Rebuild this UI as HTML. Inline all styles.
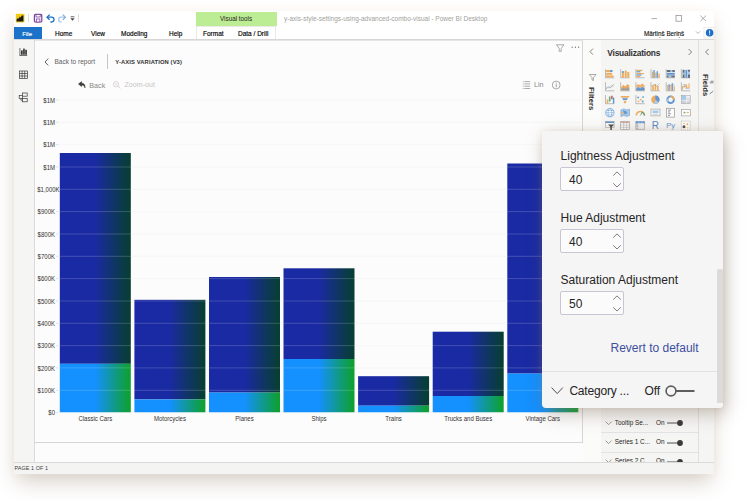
<!DOCTYPE html>
<html lang="en">
<head>
<meta charset="utf-8">
<title>Power BI Desktop</title>
<style>
html,body{margin:0;padding:0;}
body{width:750px;height:500px;overflow:hidden;background:#fff;position:relative;font-family:"Liberation Sans",sans-serif;color:#252423;}
.abs,.win *{position:absolute;}
.win{position:absolute;left:14px;top:11px;width:700px;height:463px;background:#fff;box-shadow:0 11px 20px -3px rgba(125,110,90,.30),0 2px 10px rgba(235,195,140,.13);}
.t{white-space:nowrap;line-height:1;}
/* title bar */
.titlebar{left:0;top:0;width:700px;height:16px;background:#fff;}
.tabs{left:0;top:16px;width:700px;height:12px;background:#fff;}
.file{left:0;top:16px;width:28px;height:12px;background:#1b72c8;}
.ribline{left:0;top:28px;width:700px;height:1px;background:#d8d6d4;}
.tab{font-size:6.5px;top:19.5px;color:#000;-webkit-text-stroke:.15px #000;}
.vt{left:182px;top:1px;width:81px;height:14.2px;background:#bcec94;}
.ctxtabs{left:182px;top:15.2px;width:80px;height:13px;border:1px solid #ebe9e7;border-bottom:none;background:#fff;box-sizing:border-box;}
/* left nav */
.leftnav{left:0;top:29px;width:21px;height:422px;background:#f5f5f4;border-right:1px solid #dcdad8;box-sizing:border-box;}
/* canvas */
.canvas{left:21px;top:29px;width:548px;height:403px;background:#fcfcfc;border:1px solid #d8d6d4;border-top-color:#e8e6e4;border-left:none;box-sizing:border-box;}
.pagetabs{left:21px;top:432px;width:548px;height:19px;background:#fcfcfc;box-sizing:border-box;}
.status{left:0;top:451px;width:700px;height:12px;background:#f4f4f3;border-top:1px solid #dcdad8;box-sizing:border-box;}
/* panes */
.filters{left:569px;top:29px;width:18px;height:422px;background:#fbfbfa;}
.viz{left:587px;top:29px;width:97px;height:422px;background:#f5f5f4;}
.fields{left:685px;top:29px;width:15px;height:422px;background:#f5f5f4;}
/* popup */
.pop{position:absolute;left:542px;top:131px;width:181px;height:277px;background:#f5f5f6;border-radius:2px 2px 4px 4px;overflow:hidden;}
.popsh{position:absolute;left:542px;top:131px;width:181px;height:277px;border-radius:2px 2px 4px 4px;box-shadow:3px 6px 18px rgba(110,95,75,.36),0 0 7px rgba(200,165,120,.20);}
.pop *{position:absolute;}
.lbl{font-size:12px;color:#252423;left:18.6px;}
.inp{left:18px;width:63.5px;height:23.6px;box-sizing:border-box;border:1px solid #cbc4d4;border-radius:2px;background:#fbfbfb;}
.inp .v{left:8px;top:5.6px;font-size:12px;}
</style>
</head>
<body>
<div class="win" id="win">
  <div class="titlebar"></div>
  <div class="tabs"></div>
  <div class="vt"></div>
  <div class="ctxtabs"></div>
  <div class="file"></div>
  <div class="ribline"></div>
  <!-- title bar icons -->
  <svg class="abs" style="left:0;top:0" width="80" height="16" viewBox="0 0 80 16">
    <rect x="1.8" y="2.8" width="8.6" height="8.6" fill="#f2c811"/>
    <path d="M2.6 10.4 V8.4 L4 7 L4.8 7.8 L5.8 5.6 L6.6 6.6 L7.8 4.4 L9.4 4.4 V10.4 Z" fill="#1a1a1a"/>
    <rect x="14" y="3" width="0.6" height="8" fill="#c8c6c4"/>
    <rect x="20.4" y="3.4" width="7.4" height="7.6" rx="1" fill="none" stroke="#7b3f9e" stroke-width="1.2"/>
    <rect x="22" y="3.4" width="4.2" height="2.6" fill="#fff" stroke="#7b3f9e" stroke-width="0.8"/>
    <rect x="22.3" y="8" width="3.6" height="3" fill="#fff" stroke="#7b3f9e" stroke-width="0.8"/>
    <path d="M33.6 6.2 H37.6 A2.4 2.4 0 0 1 37.6 11 H36.4" fill="none" stroke="#1f6fc6" stroke-width="1.3"/>
    <path d="M35.6 3.6 L33 6.2 L35.6 8.8" fill="none" stroke="#1f6fc6" stroke-width="1.3"/>
    <g transform="translate(1.2 0)"><path d="M49.4 6.2 H45.8 A2.4 2.4 0 0 0 45.8 11 H46.6" fill="none" stroke="#a9c4e6" stroke-width="1.2"/>
    <path d="M47.6 3.6 L50.2 6.2 L47.6 8.8" fill="none" stroke="#7fa8dc" stroke-width="1.2"/></g>
    <rect x="56.6" y="5.4" width="3.8" height="0.8" fill="#444"/>
    <path d="M56.4 7.2 H60.6 L58.5 9.8 Z" fill="#444"/>
    <rect x="64.4" y="3" width="0.6" height="8" fill="#c8c6c4"/>
  </svg>
  <div class="t" style="left:270px;top:4.5px;font-size:6.5px;color:#a19f9d;">y-axis-style-settings-using-advanced-combo-visual - Power BI Desktop</div>
  <svg class="abs" style="left:630px;top:0" width="70" height="16" viewBox="0 0 70 16">
    <path d="M7.5 7.6 H13" stroke="#8a8886" stroke-width="0.7"/>
    <rect x="32" y="4.6" width="5.6" height="5.6" fill="none" stroke="#8a8886" stroke-width="0.7"/>
    <path d="M56.4 4.6 L62 10.2 M62 4.6 L56.4 10.2" stroke="#8a8886" stroke-width="0.7"/>
  </svg>
  <!-- ribbon tabs -->
  <div class="t tab" style="left:8.2px;color:#fff;font-size:6.2px;-webkit-text-stroke:.15px #fff;">File</div>
  <div class="t tab" style="left:41px;">Home</div>
  <div class="t tab" style="left:77px;">View</div>
  <div class="t tab" style="left:107px;">Modeling</div>
  <div class="t tab" style="left:155px;">Help</div>
  <div class="t tab" style="left:189px;">Format</div>
  <div class="t tab" style="left:224px;">Data / Drill</div>
  <div class="t" style="left:206px;top:5px;font-size:6.3px;color:#252423;">Visual tools</div>
  <div class="t" style="left:630px;top:19.5px;font-size:6.3px;color:#111;-webkit-text-stroke:.12px #111;">Mārtiņš Beriņš</div>
  <svg class="abs" style="left:678px;top:16px" width="22" height="12" viewBox="0 0 22 12">
    <path d="M4 4.4 L6 6.4 L8 4.4" fill="none" stroke="#8a8886" stroke-width="0.6"/>
    <rect x="12" y="0.5" width="10" height="10.5" fill="#fff" stroke="#dcdad8" stroke-width="0.5"/>
    <circle cx="17.6" cy="5.8" r="3.8" fill="#1b6ec9"/>
    <rect x="17.2" y="3.4" width="0.9" height="3.2" fill="#fff"/>
    <rect x="17.2" y="7.2" width="0.9" height="0.9" fill="#fff"/>
  </svg>
  <div class="leftnav"></div>
  <svg class="abs" style="left:0;top:29px" width="20" height="70" viewBox="0 0 20 70">
    <g fill="#3b3a39">
      <rect x="5.6" y="8" width="0.7" height="7.6"/><rect x="5.6" y="15" width="7.6" height="0.7"/>
      <rect x="7" y="10.4" width="1.7" height="4.4"/><rect x="9.1" y="8.6" width="1.7" height="6.2"/><rect x="11.2" y="9.8" width="1.7" height="5"/>
    </g>
    <g fill="none" stroke="#3b3a39" stroke-width="0.7">
      <rect x="5.4" y="31" width="8" height="7.4"/>
      <path d="M5.4 33.5 H13.4 M5.4 36 H13.4 M8.1 31 V38.4 M10.7 31 V38.4"/>
      <rect x="8.6" y="53" width="4.6" height="3.2"/>
      <rect x="5.2" y="55.4" width="3.4" height="3.2" fill="#f3f2f1"/>
      <rect x="8.6" y="58.6" width="4.6" height="3.2"/>
      <path d="M6.9 58.6 V60.2 H8.6"/>
    </g>
  </svg>
  <div class="canvas" id="canvas"></div>
  <div class="pagetabs"></div>
  <!-- focus-mode toolbar -->
  <svg class="abs" style="left:28px;top:40px" width="30" height="20" viewBox="0 0 30 20">
    <path d="M6.2 7.6 L3 11 L6.2 14.4" fill="none" stroke="#605e5c" stroke-width="1"/>
  </svg>
  <div class="t" style="left:40.5px;top:48.3px;font-size:6.5px;color:#605e5c;">Back to report</div>
  <div style="left:92.5px;top:43px;width:1px;height:15px;background:#c8c6c4;"></div>
  <div class="t" style="left:101.3px;top:48.7px;font-size:5.8px;font-weight:bold;letter-spacing:.12px;color:#323130;">Y-AXIS VARIATION (V3)</div>
  <svg class="abs" style="left:60px;top:66px" width="90" height="16" viewBox="0 0 90 16">
    <path d="M7.6 4.6 L4.4 7 L7.6 9.6 V8 Q10.4 7.8 11 11 Q11.6 6.4 7.6 6.2 Z" fill="#3b3a39" stroke="#3b3a39" stroke-width="0.5" stroke-linejoin="round"/>
    <circle cx="42" cy="7.2" r="2.6" fill="none" stroke="#c8c6c4" stroke-width="0.7"/>
    <path d="M44 9.2 L46.2 11.4" stroke="#c8c6c4" stroke-width="0.8"/>
    <path d="M40.8 7.2 H43.2" stroke="#c8c6c4" stroke-width="0.6"/>
  </svg>
  <div class="t" style="left:75.3px;top:70.6px;font-size:7.2px;color:#8a8886;">Back</div>
  <div class="t" style="left:110.5px;top:70.6px;font-size:7.1px;color:#c8c6c4;">Zoom-out</div>
  <svg class="abs" style="left:500px;top:30px" width="70" height="60" viewBox="0 0 70 60">
    <path d="M42.4 3.8 H50 L47.2 7.4 V10.4 H45.2 V7.4 Z" fill="none" stroke="#8a8886" stroke-width="0.7" stroke-linejoin="round"/>
    <circle cx="58.2" cy="6.2" r="0.6" fill="#605e5c"/><circle cx="61.4" cy="6.2" r="0.6" fill="#605e5c"/><circle cx="64.6" cy="6.2" r="0.6" fill="#605e5c"/>
    <g stroke="#8a8886" stroke-width="0.7">
      <path d="M10.4 40.6 H16.2 M10.4 42.9 H16.2 M10.4 45.2 H16.2 M10.4 47.5 H16.2"/>
      <path d="M8.8 40.6 H9.7 M8.8 42.9 H9.7 M8.8 45.2 H9.7 M8.8 47.5 H9.7"/>
    </g>
    <circle cx="42.2" cy="44" r="3.9" fill="none" stroke="#8a8886" stroke-width="0.7"/>
    <rect x="41.8" y="43.2" width="0.8" height="3" fill="#8a8886"/><rect x="41.8" y="41.6" width="0.8" height="0.9" fill="#8a8886"/>
  </svg>
  <div class="t" style="left:520px;top:70px;font-size:7.2px;color:#8a8886;">Lin</div>
  <!-- filters pane -->
  <div class="filters"></div>
  <svg class="abs" style="left:569px;top:29px" width="17" height="100" viewBox="0 0 17 100">
    <path d="M10 8.6 L7 11.6 L10 14.6" fill="none" stroke="#605e5c" stroke-width="0.8"/>
    <path d="M6.3 34.5 H13 L10.4 37.6 V40.6 L9 39.8 V37.6 Z" fill="none" stroke="#8a8886" stroke-width="0.7" stroke-linejoin="round"/>
  </svg>
  <div class="t" style="left:572.8px;top:76.4px;font-size:7.8px;font-weight:bold;color:#323130;writing-mode:vertical-rl;">Filters</div>
  <!-- viz pane -->
  <div class="viz" id="viz"></div>
  <div class="t" style="left:593.3px;top:37.5px;font-size:8.4px;font-weight:bold;color:#323130;letter-spacing:-.2px;">Visualizations</div>
  <!--VIZICONS-->
<svg class="abs" style="left:586px;top:50px;opacity:.88" width="100" height="72" viewBox="600 61 100 72">
<g transform="translate(604.7 68.6)"><path d="M0.8 0.6 V9.2 H9.6" fill="none" stroke="#8a8886" stroke-width="0.6"/><rect x="1.4" y="1.4" width="4" height="2" fill="#eda24a"/><rect x="5.4" y="1.4" width="2.4" height="2" fill="#4a8bd0"/><rect x="1.4" y="4.2" width="6" height="2" fill="#eda24a"/><rect x="1.4" y="6.8" width="3" height="2" fill="#eda24a"/><rect x="4.4" y="6.8" width="4.4" height="2" fill="#eda24a"/></g>
<g transform="translate(619.9 68.6)"><path d="M0.8 0.6 V9.2 H9.6" fill="none" stroke="#8a8886" stroke-width="0.6"/><rect x="2" y="4" width="2" height="5" fill="#eda24a"/><rect x="2" y="2.6" width="2" height="1.6" fill="#4a8bd0"/><rect x="4.8" y="2" width="2" height="7" fill="#eda24a"/><rect x="7.4" y="3.4" width="2" height="5.6" fill="#eda24a"/></g>
<g transform="translate(635.1 68.6)"><path d="M0.8 0.6 V9.2 H9.6" fill="none" stroke="#8a8886" stroke-width="0.6"/><rect x="1.4" y="1.2" width="6" height="1.2" fill="#eda24a"/><rect x="1.4" y="2.6" width="4" height="1.2" fill="#4a8bd0"/><rect x="1.4" y="4.4" width="7.6" height="1.2" fill="#eda24a"/><rect x="1.4" y="5.8" width="5" height="1.2" fill="#4a8bd0"/><rect x="1.4" y="7.4" width="3.6" height="1.2" fill="#eda24a"/></g>
<g transform="translate(650.2 68.6)"><path d="M0.8 0.6 V9.2 H9.6" fill="none" stroke="#8a8886" stroke-width="0.6"/><rect x="1.8" y="3" width="1.3" height="6" fill="#eda24a"/><rect x="3.2" y="1.4" width="1.3" height="7.6" fill="#4a8bd0"/><rect x="5" y="4" width="1.3" height="5" fill="#eda24a"/><rect x="6.4" y="2.6" width="1.3" height="6.4" fill="#4a8bd0"/><rect x="8.2" y="5" width="1.3" height="4" fill="#eda24a"/></g>
<g transform="translate(665.4 68.6)"><path d="M0.8 0.6 V9.2 H9.6" fill="none" stroke="#8a8886" stroke-width="0.6"/><rect x="1.4" y="1.4" width="8" height="2" fill="#505a66"/><rect x="1.4" y="4.2" width="8" height="2" fill="#4a8bd0"/><rect x="1.4" y="6.8" width="8" height="2" fill="#505a66"/><rect x="5" y="1.4" width="2" height="2" fill="#9ec3e6"/><rect x="3" y="6.8" width="3" height="2" fill="#9ec3e6"/></g>
<g transform="translate(680.6 68.6)"><path d="M0.8 0.6 V9.2 H9.6" fill="none" stroke="#8a8886" stroke-width="0.6"/><rect x="2" y="1.2" width="2" height="8" fill="#505a66"/><rect x="4.8" y="1.2" width="2" height="8" fill="#4a8bd0"/><rect x="7.4" y="1.2" width="2" height="8" fill="#505a66"/><rect x="2" y="4" width="2" height="2" fill="#9ec3e6"/><rect x="7.4" y="3" width="2" height="3" fill="#9ec3e6"/></g>
<g transform="translate(604.7 81.6)"><path d="M0.8 0.6 V9.2 H9.6" fill="none" stroke="#8a8886" stroke-width="0.6"/><path d="M1.2 7.4 L3.6 5.2 L5.6 6.4 L9.2 2.6" fill="none" stroke="#8a8886" stroke-width="0.7"/><path d="M1.2 5 L3.6 6.6 L6 4 L9.2 4.6" fill="none" stroke="#9ec3e6" stroke-width="0.6"/></g>
<g transform="translate(619.9 81.6)"><path d="M0.8 0.6 V9.2 H9.6" fill="none" stroke="#8a8886" stroke-width="0.6"/><path d="M1.2 9 V5.6 L3.4 3.2 L5.4 5 L7.6 2.4 L9.4 4 V9 Z" fill="#eda24a"/><path d="M1.2 9 V7.4 L3.4 6 L5.4 7.2 L7.6 5.6 L9.4 6.6 V9 Z" fill="#4a8bd0" fill-opacity=".55"/></g>
<g transform="translate(635.1 81.6)"><path d="M0.8 0.6 V9.2 H9.6" fill="none" stroke="#8a8886" stroke-width="0.6"/><path d="M1.2 9 V4 L3.2 2.4 L5 4 L7 2 L9.4 3.6 V9 Z" fill="#eda24a"/><path d="M1.2 9 V6.6 L3.2 5 L5 6.6 L7 4.8 L9.4 6.2 V9 Z" fill="#4a8bd0"/><path d="M1.2 6.6 L3.2 5 L5 6.6 L7 4.8 L9.4 6.2" fill="none" stroke="#fff" stroke-width=".4"/></g>
<g transform="translate(650.2 81.6)"><path d="M0.8 0.6 V9.2 H9.6" fill="none" stroke="#8a8886" stroke-width="0.6"/><rect x="2" y="3.6" width="1.6" height="5.4" fill="#eda24a"/><rect x="4.4" y="2.4" width="1.6" height="6.6" fill="#eda24a"/><rect x="6.8" y="4.4" width="1.6" height="4.6" fill="#eda24a"/><path d="M1.4 4.6 L4 2.8 L6.4 4.8 L9.4 2" fill="none" stroke="#8a8886" stroke-width="0.5"/></g>
<g transform="translate(665.4 81.6)"><path d="M0.8 0.6 V9.2 H9.6" fill="none" stroke="#8a8886" stroke-width="0.6"/><rect x="1.8" y="4" width="1.2" height="5" fill="#eda24a"/><rect x="3.1" y="2.6" width="1.2" height="6.4" fill="#4a8bd0"/><rect x="5" y="3.4" width="1.2" height="5.6" fill="#eda24a"/><rect x="6.3" y="1.6" width="1.2" height="7.4" fill="#4a8bd0"/><rect x="8.2" y="4.6" width="1.2" height="4.4" fill="#eda24a"/><path d="M1.4 3.6 L4 5 L6.4 2.8 L9.4 3.6" fill="none" stroke="#8a8886" stroke-width="0.5"/></g>
<g transform="translate(680.6 81.6)"><path d="M0.8 0.6 V9.2 H9.6" fill="none" stroke="#8a8886" stroke-width="0.6"/><path d="M2 8 V5 H4 V3.4 H6 V6.4 H8.4 V2" fill="none" stroke="#eda24a" stroke-width="1.1"/><path d="M2 3 H5 V7 H9" fill="none" stroke="#9ec3e6" stroke-width="0.7"/></g>
<g transform="translate(604.7 94.5)"><path d="M0.8 0.6 V9.2 H9.6" fill="none" stroke="#8a8886" stroke-width="0.6"/><rect x="2" y="5" width="1.6" height="4" fill="#eda24a"/><rect x="4.2" y="2" width="1.6" height="5" fill="#4aa564"/><rect x="6.4" y="1.2" width="1.6" height="3.6" fill="#d64550"/><rect x="8.2" y="3" width="1.4" height="6" fill="#4a8bd0"/></g>
<g transform="translate(619.9 94.5)"><path d="M0.6 1.4 H9.6 L8.4 3.2 H1.8 Z" fill="#eda24a"/><path d="M2.2 3.8 H8 L7 5.6 H3.2 Z" fill="#4a8bd0"/><path d="M3.6 6.2 H6.6 L5.8 8.8 H4.4 Z" fill="#eda24a"/></g>
<g transform="translate(635.1 94.5)"><path d="M0.8 0.6 V9.2 H9.6" fill="none" stroke="#8a8886" stroke-width="0.6"/><circle cx="3" cy="3" r="0.9" fill="#4a8bd0"/><circle cx="5.6" cy="5.2" r="0.9" fill="#eda24a"/><circle cx="8" cy="2.6" r="0.9" fill="#4a8bd0"/><circle cx="3.4" cy="6.8" r="0.9" fill="#eda24a"/><circle cx="7.6" cy="7" r="0.9" fill="#4a8bd0"/></g>
<g transform="translate(650.2 94.5)"><circle cx="5.2" cy="5.2" r="4.2" fill="#eda24a"/><path d="M5.2 5.2 V1 A4.2 4.2 0 0 1 8.4 8 Z" fill="#4a8bd0"/><path d="M5.2 5.2 L8.4 8 A4.2 4.2 0 0 1 3.6 9.1 Z" fill="#9ec3e6"/></g>
<g transform="translate(665.4 94.5)"><circle cx="5.2" cy="5.2" r="3.3" fill="none" stroke="#4a8bd0" stroke-width="1.9"/><path d="M5.2 1.9 A3.3 3.3 0 0 1 8.5 5.2" fill="none" stroke="#eda24a" stroke-width="1.9"/><path d="M2.4 7 A3.3 3.3 0 0 1 2 4.4" fill="none" stroke="#9ec3e6" stroke-width="1.9"/></g>
<g transform="translate(680.6 94.5)"><rect x="0.8" y="0.8" width="8.8" height="8.4" fill="#d0d4d8" stroke="#8a8886" stroke-width="0.5"/><rect x="1.2" y="1.2" width="4.6" height="4.4" fill="#9ec3e6"/><rect x="6.2" y="1.2" width="3" height="2.6" fill="#eef"/><rect x="1.2" y="6" width="3" height="2.8" fill="#c6ccd2"/><path d="M6 1 V9 M1 5.8 H9.4" stroke="#fff" stroke-width=".5"/></g>
<g transform="translate(604.7 107.5)"><circle cx="5.2" cy="5.2" r="4.1" fill="#fff" stroke="#4a8bd0" stroke-width="0.7"/><ellipse cx="5.2" cy="5.2" rx="1.9" ry="4.1" fill="none" stroke="#4a8bd0" stroke-width="0.5"/><path d="M1.1 5.2 H9.3 M1.8 3 H8.6 M1.8 7.4 H8.6" stroke="#4a8bd0" stroke-width="0.5"/></g>
<g transform="translate(619.9 107.5)"><path d="M1 2.4 L4 1.4 L7 2.4 L9.6 1.6 V8 L7 9 L4 8 L1 9 Z" fill="#9ec3e6" stroke="#4a8bd0" stroke-width="0.5"/><path d="M3 3 L6 3.6 L7.6 6 L4.4 6.8 Z" fill="#4a8bd0"/><path d="M1.4 5 H4 V7.4" stroke="#eda24a" stroke-width="0.8" fill="none"/></g>
<g transform="translate(635.1 107.5)"><path d="M1.2 8 A4.1 4.1 0 0 1 9.4 8" fill="none" stroke="#eda24a" stroke-width="1.5"/><path d="M6.8 4.6 A4.1 4.1 0 0 1 9.4 8" fill="none" stroke="#4aa564" stroke-width="1.5"/><path d="M5.2 8 L7.4 4.4" stroke="#505a66" stroke-width="0.7"/></g>
<g transform="translate(650.2 107.5)"><rect x="0.8" y="1.6" width="9" height="6.8" fill="#fff" stroke="#8a8886" stroke-width="0.6"/><rect x="2.2" y="3" width="6.2" height="2.6" fill="#9ec3e6"/><path d="M2.6 6.8 H8" stroke="#8a8886" stroke-width="0.5"/></g>
<g transform="translate(665.4 107.5)"><rect x="1.2" y="0.8" width="8" height="8.8" fill="#fff" stroke="#8a8886" stroke-width="0.7"/><path d="M2.6 2.6 H5.6 M2.6 4.4 H4.6 M2.6 6.2 H5.6 M2.6 8 H4.6" stroke="#505a66" stroke-width="0.7"/></g>
<g transform="translate(680.6 107.5)"><rect x="0.8" y="1.8" width="9" height="6.6" fill="#fff" stroke="#8a8886" stroke-width="0.6"/><path d="M2.4 5.8 L4 4 L5.4 5.8 Z" fill="#4aa564"/><rect x="6.2" y="4.4" width="2" height="1.2" fill="#eda24a"/></g>
<g transform="translate(604.7 120.4)"><rect x="0.8" y="1" width="8.6" height="1.6" fill="#4a8bd0"/><rect x="0.8" y="1" width="8.6" height="6" fill="none" stroke="#8a8886" stroke-width="0.5"/><path d="M3.4 4 H9.4 L7.2 6.6 V9.6 H5.6 V6.6 Z" fill="#3b3a39"/></g>
<g transform="translate(619.9 120.4)"><rect x="0.8" y="1" width="8.8" height="8.2" fill="#fff" stroke="#8a8886" stroke-width="0.6"/><rect x="0.8" y="1" width="8.8" height="1.8" fill="#c9a8a0"/><path d="M0.8 4.8 H9.6 M0.8 7 H9.6 M3.8 1 V9.2 M6.8 1 V9.2" stroke="#8a8886" stroke-width="0.4"/></g>
<g transform="translate(635.1 120.4)"><rect x="0.8" y="1" width="8.8" height="8.2" fill="#e6e6e6" stroke="#8a8886" stroke-width="0.6"/><rect x="0.8" y="1" width="8.8" height="1.8" fill="#4a8bd0"/><rect x="0.8" y="2.8" width="2.6" height="6.4" fill="#b0b4b8"/><path d="M0.8 4.8 H9.6 M0.8 7 H9.6 M3.8 1 V9.2 M6.8 1 V9.2" stroke="#fff" stroke-width="0.4"/></g>
<g transform="translate(650.2 120.4)"><text x="5.2" y="9" text-anchor="middle" font-size="10" font-family="Liberation Sans, sans-serif" fill="#4a78b8">R</text></g>
<g transform="translate(665.4 120.4)"><text x="5.2" y="7.8" text-anchor="middle" font-size="7.6" font-family="Liberation Sans, sans-serif" fill="#4a88c8">Py</text></g>
<g transform="translate(680.6 120.4)"><rect x="0.8" y="0.8" width="8.8" height="8.8" fill="#fff" stroke="#8a8886" stroke-width="0.5" stroke-dasharray="1.2 0.8"/><circle cx="3.4" cy="6.4" r="1.5" fill="#3b3a39"/><circle cx="6.8" cy="3.8" r="1" fill="#eda24a"/><circle cx="7.2" cy="7.4" r="0.8" fill="#f2c811"/><circle cx="3.4" cy="3" r="0.7" fill="#eda24a"/></g>
</svg>
<!--VIZROWS-->
<div style="left:587px;top:397px;width:97px;height:54px;overflow:hidden;">
<svg style="left:3px;top:10.6px" width="10" height="8" viewBox="0 0 10 8"><path d="M1.6 2.6 L4.6 5.6 L7.6 2.6" fill="none" stroke="#605e5c" stroke-width="0.6"/></svg>
<div class="t" style="left:13.8px;top:11.7px;font-size:6.4px;color:#252423;">Tooltip Se...</div>
<div class="t" style="left:55px;top:11.7px;font-size:6.4px;color:#252423;">On</div>
<svg style="left:64px;top:10.2px" width="20" height="10" viewBox="0 0 20 10"><path d="M2 5 H13" stroke="#3b3a39" stroke-width="0.9"/><circle cx="15" cy="5" r="2.9" fill="#3b3a39"/></svg>
<svg style="left:3px;top:30.2px" width="10" height="8" viewBox="0 0 10 8"><path d="M1.6 2.6 L4.6 5.6 L7.6 2.6" fill="none" stroke="#605e5c" stroke-width="0.6"/></svg>
<div class="t" style="left:13.8px;top:31.3px;font-size:6.4px;color:#252423;">Series 1 C...</div>
<div class="t" style="left:55px;top:31.3px;font-size:6.4px;color:#252423;">On</div>
<svg style="left:64px;top:29.8px" width="20" height="10" viewBox="0 0 20 10"><path d="M2 5 H13" stroke="#3b3a39" stroke-width="0.9"/><circle cx="15" cy="5" r="2.9" fill="#3b3a39"/></svg>
<svg style="left:3px;top:49.0px" width="10" height="8" viewBox="0 0 10 8"><path d="M1.6 2.6 L4.6 5.6 L7.6 2.6" fill="none" stroke="#605e5c" stroke-width="0.6"/></svg>
<div class="t" style="left:13.8px;top:50.1px;font-size:6.4px;color:#252423;">Series 2 C...</div>
<div class="t" style="left:55px;top:50.1px;font-size:6.4px;color:#252423;">On</div>
<svg style="left:64px;top:48.6px" width="20" height="10" viewBox="0 0 20 10"><path d="M2 5 H13" stroke="#3b3a39" stroke-width="0.9"/><circle cx="15" cy="5" r="2.9" fill="#3b3a39"/></svg>
<div style="left:0;top:24.3px;width:97px;height:1px;background:#e4e2e6;"></div>
<div style="left:0;top:43.6px;width:97px;height:1px;background:#e4e2e6;"></div>
</div>
<!--/VIZROWS-->
  <div class="fields"></div>
  <div style="left:684px;top:29px;width:1px;height:422px;background:#e1dfdd;"></div>
  <div class="t" style="left:687.2px;top:63px;font-size:7.7px;font-weight:bold;color:#323130;writing-mode:vertical-rl;">Fields</div>
  <svg class="abs" style="left:686px;top:60px" width="14" height="40" viewBox="0 0 14 40">
    <path d="M10.6 10.3 H13.6 M9.8 11.8 H13.4 M9.6 23 L13.2 20.2" stroke="#3b3a39" stroke-width="0.6" fill="none"/>
  </svg>
  <svg class="abs" style="left:668px;top:34px" width="32" height="14" viewBox="0 0 32 14">
    <path d="M6.6 4 L9.6 7 L6.6 10" fill="none" stroke="#605e5c" stroke-width="0.8"/>
    <path d="M26.6 4 L23.6 7 L26.6 10" fill="none" stroke="#605e5c" stroke-width="0.8"/>
  </svg>
  <div class="status"></div>
  <div class="t" style="left:0.5px;top:455px;font-size:5.4px;color:#3b3a39;letter-spacing:.1px;">PAGE 1 OF 1</div>
</div>
<!--CHART-->
<svg class="abs" id="chart" style="left:0;top:0" width="750" height="500" viewBox="0 0 750 500" font-family="Liberation Sans, sans-serif">
<defs>
<linearGradient id="gd" x1="0" x2="1" y1="0" y2="0"><stop offset="0" stop-color="#1a2aa5"/><stop offset="0.5" stop-color="#1a2aa2"/><stop offset="0.97" stop-color="#083e36"/><stop offset="1" stop-color="#083e36"/></linearGradient>
<linearGradient id="gl" x1="0" x2="1" y1="0" y2="0"><stop offset="0" stop-color="#1490ff"/><stop offset="0.5" stop-color="#1490ff"/><stop offset="0.97" stop-color="#0ea034"/><stop offset="1" stop-color="#0ea034"/></linearGradient>
</defs>
<line x1="59" x2="581" y1="412.6" y2="412.6" stroke="#f3f5f6" stroke-width="0.9"/>
<line x1="56.4" x2="58.2" y1="412.6" y2="412.6" stroke="#c8d0c0" stroke-width="0.7"/>
<text transform="translate(55 415.2) scale(0.86 1)" text-anchor="end" font-size="7" fill="#323130">$0</text>
<line x1="59" x2="581" y1="390.3" y2="390.3" stroke="#f3f5f6" stroke-width="0.9"/>
<line x1="56.4" x2="58.2" y1="390.3" y2="390.3" stroke="#c8d0c0" stroke-width="0.7"/>
<text transform="translate(55 392.9) scale(0.86 1)" text-anchor="end" font-size="7" fill="#323130">$100K</text>
<line x1="59" x2="581" y1="367.9" y2="367.9" stroke="#f3f5f6" stroke-width="0.9"/>
<line x1="56.4" x2="58.2" y1="367.9" y2="367.9" stroke="#c8d0c0" stroke-width="0.7"/>
<text transform="translate(55 370.5) scale(0.86 1)" text-anchor="end" font-size="7" fill="#323130">$200K</text>
<line x1="59" x2="581" y1="345.6" y2="345.6" stroke="#f3f5f6" stroke-width="0.9"/>
<line x1="56.4" x2="58.2" y1="345.6" y2="345.6" stroke="#c8d0c0" stroke-width="0.7"/>
<text transform="translate(55 348.2) scale(0.86 1)" text-anchor="end" font-size="7" fill="#323130">$300K</text>
<line x1="59" x2="581" y1="323.3" y2="323.3" stroke="#f3f5f6" stroke-width="0.9"/>
<line x1="56.4" x2="58.2" y1="323.3" y2="323.3" stroke="#c8d0c0" stroke-width="0.7"/>
<text transform="translate(55 325.9) scale(0.86 1)" text-anchor="end" font-size="7" fill="#323130">$400K</text>
<line x1="59" x2="581" y1="301.0" y2="301.0" stroke="#f3f5f6" stroke-width="0.9"/>
<line x1="56.4" x2="58.2" y1="301.0" y2="301.0" stroke="#c8d0c0" stroke-width="0.7"/>
<text transform="translate(55 303.6) scale(0.86 1)" text-anchor="end" font-size="7" fill="#323130">$500K</text>
<line x1="59" x2="581" y1="278.6" y2="278.6" stroke="#f3f5f6" stroke-width="0.9"/>
<line x1="56.4" x2="58.2" y1="278.6" y2="278.6" stroke="#c8d0c0" stroke-width="0.7"/>
<text transform="translate(55 281.2) scale(0.86 1)" text-anchor="end" font-size="7" fill="#323130">$600K</text>
<line x1="59" x2="581" y1="256.3" y2="256.3" stroke="#f3f5f6" stroke-width="0.9"/>
<line x1="56.4" x2="58.2" y1="256.3" y2="256.3" stroke="#c8d0c0" stroke-width="0.7"/>
<text transform="translate(55 258.9) scale(0.86 1)" text-anchor="end" font-size="7" fill="#323130">$700K</text>
<line x1="59" x2="581" y1="234.0" y2="234.0" stroke="#f3f5f6" stroke-width="0.9"/>
<line x1="56.4" x2="58.2" y1="234.0" y2="234.0" stroke="#c8d0c0" stroke-width="0.7"/>
<text transform="translate(55 236.6) scale(0.86 1)" text-anchor="end" font-size="7" fill="#323130">$800K</text>
<line x1="59" x2="581" y1="211.6" y2="211.6" stroke="#f3f5f6" stroke-width="0.9"/>
<line x1="56.4" x2="58.2" y1="211.6" y2="211.6" stroke="#c8d0c0" stroke-width="0.7"/>
<text transform="translate(55 214.2) scale(0.86 1)" text-anchor="end" font-size="7" fill="#323130">$900K</text>
<line x1="59" x2="581" y1="189.3" y2="189.3" stroke="#f3f5f6" stroke-width="0.9"/>
<line x1="56.4" x2="58.2" y1="189.3" y2="189.3" stroke="#c8d0c0" stroke-width="0.7"/>
<text transform="translate(37.2 191.9) scale(0.86 1)" font-size="7" fill="#323130">$1,000K</text>
<line x1="59" x2="581" y1="167.0" y2="167.0" stroke="#f3f5f6" stroke-width="0.9"/>
<line x1="56.4" x2="58.2" y1="167.0" y2="167.0" stroke="#c8d0c0" stroke-width="0.7"/>
<text transform="translate(55 169.6) scale(0.86 1)" text-anchor="end" font-size="7" fill="#323130">$1M</text>
<line x1="59" x2="581" y1="144.6" y2="144.6" stroke="#f3f5f6" stroke-width="0.9"/>
<line x1="56.4" x2="58.2" y1="144.6" y2="144.6" stroke="#c8d0c0" stroke-width="0.7"/>
<text transform="translate(55 147.2) scale(0.86 1)" text-anchor="end" font-size="7" fill="#323130">$1M</text>
<line x1="59" x2="581" y1="122.3" y2="122.3" stroke="#f3f5f6" stroke-width="0.9"/>
<line x1="56.4" x2="58.2" y1="122.3" y2="122.3" stroke="#c8d0c0" stroke-width="0.7"/>
<text transform="translate(55 124.9) scale(0.86 1)" text-anchor="end" font-size="7" fill="#323130">$1M</text>
<line x1="59" x2="581" y1="100.0" y2="100.0" stroke="#f3f5f6" stroke-width="0.9"/>
<line x1="56.4" x2="58.2" y1="100.0" y2="100.0" stroke="#c8d0c0" stroke-width="0.7"/>
<text transform="translate(55 102.6) scale(0.86 1)" text-anchor="end" font-size="7" fill="#323130">$1M</text>
<rect x="59.8" y="153" width="71" height="210.8" fill="url(#gd)"/>
<rect x="59.8" y="363.8" width="71" height="48.5" fill="url(#gl)"/>
<text transform="translate(95.3 420.7) scale(0.86 1)" text-anchor="middle" font-size="7" fill="#323130">Classic Cars</text>
<rect x="134.4" y="299.8" width="71" height="99.6" fill="url(#gd)"/>
<rect x="134.4" y="399.4" width="71" height="12.9" fill="url(#gl)"/>
<text transform="translate(169.9 420.7) scale(0.86 1)" text-anchor="middle" font-size="7" fill="#323130">Motorcycles</text>
<rect x="209.0" y="277" width="71" height="115.6" fill="url(#gd)"/>
<rect x="209.0" y="392.6" width="71" height="19.7" fill="url(#gl)"/>
<text transform="translate(244.5 420.7) scale(0.86 1)" text-anchor="middle" font-size="7" fill="#323130">Planes</text>
<rect x="283.5" y="268.3" width="71" height="90.7" fill="url(#gd)"/>
<rect x="283.5" y="359" width="71" height="53.3" fill="url(#gl)"/>
<text transform="translate(319.0 420.7) scale(0.86 1)" text-anchor="middle" font-size="7" fill="#323130">Ships</text>
<rect x="358.1" y="376.2" width="71" height="29.5" fill="url(#gd)"/>
<rect x="358.1" y="405.7" width="71" height="6.6" fill="url(#gl)"/>
<text transform="translate(393.6 420.7) scale(0.86 1)" text-anchor="middle" font-size="7" fill="#323130">Trains</text>
<rect x="432.7" y="331.7" width="71" height="64.3" fill="url(#gd)"/>
<rect x="432.7" y="396" width="71" height="16.3" fill="url(#gl)"/>
<text transform="translate(468.2 420.7) scale(0.86 1)" text-anchor="middle" font-size="7" fill="#323130">Trucks and Buses</text>
<rect x="507.3" y="163.5" width="71" height="210.1" fill="url(#gd)"/>
<rect x="507.3" y="373.6" width="71" height="38.7" fill="url(#gl)"/>
<text transform="translate(542.8 420.7) scale(0.86 1)" text-anchor="middle" font-size="7" fill="#323130">Vintage Cars</text>
<line x1="59" x2="581" y1="412.6" y2="412.6" stroke="#fff" stroke-opacity="0.2" stroke-width="0.9"/>
<line x1="59" x2="581" y1="390.3" y2="390.3" stroke="#fff" stroke-opacity="0.2" stroke-width="0.9"/>
<line x1="59" x2="581" y1="367.9" y2="367.9" stroke="#fff" stroke-opacity="0.2" stroke-width="0.9"/>
<line x1="59" x2="581" y1="345.6" y2="345.6" stroke="#fff" stroke-opacity="0.2" stroke-width="0.9"/>
<line x1="59" x2="581" y1="323.3" y2="323.3" stroke="#fff" stroke-opacity="0.2" stroke-width="0.9"/>
<line x1="59" x2="581" y1="301.0" y2="301.0" stroke="#fff" stroke-opacity="0.2" stroke-width="0.9"/>
<line x1="59" x2="581" y1="278.6" y2="278.6" stroke="#fff" stroke-opacity="0.2" stroke-width="0.9"/>
<line x1="59" x2="581" y1="256.3" y2="256.3" stroke="#fff" stroke-opacity="0.2" stroke-width="0.9"/>
<line x1="59" x2="581" y1="234.0" y2="234.0" stroke="#fff" stroke-opacity="0.2" stroke-width="0.9"/>
<line x1="59" x2="581" y1="211.6" y2="211.6" stroke="#fff" stroke-opacity="0.2" stroke-width="0.9"/>
<line x1="59" x2="581" y1="189.3" y2="189.3" stroke="#fff" stroke-opacity="0.2" stroke-width="0.9"/>
<line x1="59" x2="581" y1="167.0" y2="167.0" stroke="#fff" stroke-opacity="0.2" stroke-width="0.9"/>
<line x1="59" x2="581" y1="144.6" y2="144.6" stroke="#fff" stroke-opacity="0.2" stroke-width="0.9"/>
<line x1="59" x2="581" y1="122.3" y2="122.3" stroke="#fff" stroke-opacity="0.2" stroke-width="0.9"/>
<line x1="59" x2="581" y1="100.0" y2="100.0" stroke="#fff" stroke-opacity="0.2" stroke-width="0.9"/>
</svg>
<!--/CHART-->
<div class="popsh"></div>
<div class="pop" id="pop">
  <div class="t lbl" style="top:18.5px;">Lightness Adjustment</div>
  <div class="inp" style="top:36px;"><div class="t v">40</div>
    <svg style="left:49.6px;top:1px" width="12" height="22" viewBox="0 0 12 22"><path d="M2.2 6.6 L6 2.9 L9.8 6.6 M2.2 14.3 L6 18 L9.8 14.3" fill="none" stroke="#605e5c" stroke-width="0.8"/></svg></div>
  <div class="t lbl" style="top:80.5px;">Hue Adjustment</div>
  <div class="inp" style="top:98px;"><div class="t v">40</div>
    <svg style="left:49.6px;top:1px" width="12" height="22" viewBox="0 0 12 22"><path d="M2.2 6.6 L6 2.9 L9.8 6.6 M2.2 14.3 L6 18 L9.8 14.3" fill="none" stroke="#605e5c" stroke-width="0.8"/></svg></div>
  <div class="t lbl" style="top:142.5px;">Saturation Adjustment</div>
  <div class="inp" style="top:160px;"><div class="t v">50</div>
    <svg style="left:49.6px;top:1px" width="12" height="22" viewBox="0 0 12 22"><path d="M2.2 6.6 L6 2.9 L9.8 6.6 M2.2 14.3 L6 18 L9.8 14.3" fill="none" stroke="#605e5c" stroke-width="0.8"/></svg></div>
  <div class="t" style="left:68.5px;top:210.5px;font-size:12px;color:#3d4f9f;">Revert to default</div>
  <div style="left:0;top:239.5px;width:175px;height:1px;background:#e3dfe3;"></div>
  <svg style="left:7.6px;top:253.4px" width="16" height="14" viewBox="0 0 16 14"><path d="M1.6 3.6 L7.2 9.6 L12.8 3.6" fill="none" stroke="#484644" stroke-width="0.95"/></svg>
  <div class="t" style="left:27.4px;top:253.5px;font-size:12px;color:#252423;letter-spacing:-.2px;">Category ...</div>
  <div class="t" style="left:102.4px;top:253.5px;font-size:12px;color:#252423;">Off</div>
  <svg style="left:120px;top:249.5px" width="40" height="20" viewBox="0 0 40 20">
    <path d="M14 10 H32.5" stroke="#605e5c" stroke-width="2"/>
    <circle cx="9" cy="10" r="4.9" fill="#f5f5f6" stroke="#605e5c" stroke-width="1.7"/>
  </svg>
  <div style="left:174.5px;top:138px;width:6px;height:134px;background:#dcdbda;border-radius:2px 2px 0 0;"></div>
</div>
</body>
</html>
